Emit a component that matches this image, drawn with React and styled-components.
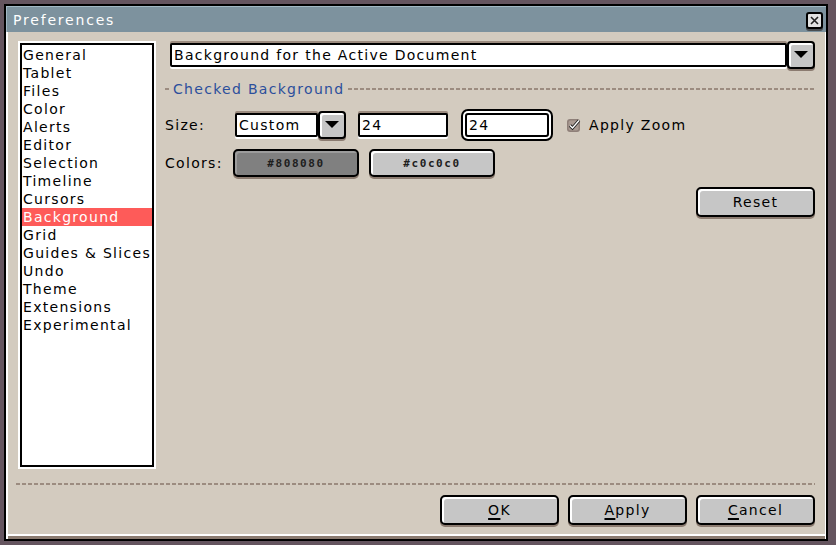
import React, { useState } from 'react';
import styled, { createGlobalStyle } from 'styled-components';

const GlobalStyle = createGlobalStyle`
  html, body {
    margin: 0;
    padding: 0;
    background: #65555f;
  }
  * {
    box-sizing: border-box;
  }
`;

const FONT = `"DejaVu Sans", "Liberation Sans", sans-serif`;

const Desktop = styled.div`
  width: 836px;
  height: 545px;
  padding: 4px 0 0 4px;
  background: #65555f;
  font-family: ${FONT};
  font-size: 14px;
  letter-spacing: 1.3px;
  color: #000;
`;

const Window = styled.div`
  width: 824px;
  height: 537px;
  border: 2px solid #000;
  background: #d3cbbf;
  display: flex;
  flex-direction: column;
  box-shadow: inset 2px 0 0 #fff, inset -1px 0 0 #fff, inset 0 -3px 0 #8b7b70, inset 0 -5px 0 #fff;
`;

const TitleBar = styled.div`
  height: 26px;
  background: #7d929e;
  border-top: 1px solid #a3b9c5;
  border-left: 1px solid #a3b9c5;
  display: flex;
  align-items: center;
  justify-content: space-between;
  padding: 0 3px 0 6px;
`;

const Title = styled.span`
  color: #fff;
  letter-spacing: 1.8px;
`;

const CloseButton = styled.button`
  width: 17px;
  height: 17px;
  padding: 0;
  margin-top: 2px;
  border: 2px solid #000;
  border-radius: 3px;
  background: #e2e2e2;
  box-shadow: 0 2px 0 #4b4f52;
  display: flex;
  align-items: center;
  justify-content: center;
`;

const Body = styled.div`
  flex: 1;
  display: flex;
  flex-direction: column;
  padding: 11px 11px 13px 14px;
`;

const Main = styled.div`
  display: flex;
  gap: 11px;
  height: 424px;
`;

const List = styled.ul`
  width: 134px;
  height: 424px;
  margin: 0;
  padding: 1px 0 0;
  list-style: none;
  background: #fff;
  border: 2px solid #000;
  box-shadow: 0 0 0 2px #fff;
`;

const ListItem = styled.li`
  height: 18px;
  line-height: 18px;
  padding-left: 1px;
  white-space: nowrap;
  background: ${p => (p.selected ? '#fe5b59' : 'transparent')};
  color: ${p => (p.selected ? '#fff' : '#000')};
`;

const Panel = styled.div`
  flex: 1;
  display: flex;
  flex-direction: column;
`;

const Combo = styled.div`
  display: flex;
  align-items: center;
  margin: ${p => (p.top ? '-2px 0 0 5px' : '0')};
`;

const Entry = styled.div`
  flex: ${p => (p.grow ? 1 : 'none')};
  width: ${p => p.width || 'auto'};
  height: 24px;
  padding: 0 2px;
  background: #fff;
  border: 2px solid #000;
  border-radius: ${p => (p.focused ? '3px' : '2px')};
  display: flex;
  align-items: center;
  white-space: nowrap;
  box-shadow: ${p =>
    p.focused
      ? '0 0 0 2px #fff, 0 0 0 4px #000'
      : '0 -2px 0 #9c8c80, 0 2px 0 #fff'};
  margin: ${p => (p.focused ? '0 4px 0 5px' : '0')};
`;

const DropButton = styled.button`
  width: 28px;
  height: 28px;
  padding: 0;
  border: 2px solid #000;
  border-radius: 4px;
  background: #c6c6c6;
  box-shadow: inset 2px 2px 0 #fff, 0 2px 0 #8b7b70;
  display: flex;
  align-items: center;
  justify-content: center;
`;

const SectionHeader = styled.div`
  display: flex;
  align-items: center;
  gap: 2px;
  height: 18px;
  margin-top: 11px;
  color: #2c4f9c;
`;

const Dash = styled.div`
  height: 2px;
  width: ${p => p.width || 'auto'};
  flex: ${p => (p.grow ? 1 : 'none')};
  margin-left: ${p => p.gap || 0}px;
  background: repeating-linear-gradient(90deg, #9c8c80 0 4px, transparent 4px 6px);
`;

const Row = styled.div`
  display: flex;
  align-items: center;
  gap: ${p => p.gap || 12}px;
  height: ${p => p.height || 30}px;
  margin-top: ${p => p.top || 0}px;
  justify-content: ${p => (p.end ? 'flex-end' : 'flex-start')};
`;

const Label = styled.span`
  width: ${p => p.width}px;
  margin-right: ${p => -p.gap}px;
`;

const Check = styled.label`
  display: flex;
  align-items: center;
  gap: 8px;
  margin-left: 2px;
`;

const SwatchButton = styled.button`
  width: 126px;
  height: 28px;
  border: 2px solid #000;
  border-radius: 5px;
  background: ${p => p.color};
  box-shadow: inset 2px 2px 0 ${p => p.light}, 0 2px 0 #8b7b70;
  font-family: "DejaVu Sans Mono", monospace;
  font-weight: bold;
  font-size: 11px;
  letter-spacing: 1.6px;
  color: #1e1e1e;
`;

const Button = styled.button`
  width: 119px;
  height: 30px;
  padding: 0;
  border: 2px solid #000;
  border-radius: 5px;
  background: #c6c6c6;
  box-shadow: inset 2px 2px 0 #fff, 0 2px 0 #8b7b70;
  font-family: ${FONT};
  font-size: 14px;
  letter-spacing: 1.3px;
  color: #000;

  u {
    text-decoration-thickness: 2px;
    text-underline-offset: 3px;
  }
`;

const Separator = styled(Dash)`
  margin: 16px 0 0 -4px;
`;

const Footer = styled.div`
  display: flex;
  justify-content: flex-end;
  gap: 9px;
  margin-top: 10px;
`;

const sections = [
  'General', 'Tablet', 'Files', 'Color', 'Alerts', 'Editor', 'Selection',
  'Timeline', 'Cursors', 'Background', 'Grid', 'Guides & Slices', 'Undo',
  'Theme', 'Extensions', 'Experimental',
];

const Arrow = () => (
  <svg width="14" height="8" viewBox="0 0 14 8">
    <polygon points="0,0 14,0 7,7" fill="#000" />
  </svg>
);

const CloseIcon = () => (
  <svg width="9" height="9" viewBox="0 0 9 9">
    <path d="M1 1L8 8M8 1L1 8" stroke="#222" strokeWidth="1.6" />
  </svg>
);

const CheckIcon = () => (
  <svg width="14" height="14" viewBox="0 0 14 14">
    <rect x="0" y="1" width="13" height="13" rx="3" fill="#8f8079" />
    <rect x="1.5" y="2.5" width="10" height="10" rx="2" fill="#a99a92" />
    <path d="M3 7.5L5.5 10L12 2.5" stroke="#222" strokeWidth="3.2" fill="none" />
    <path d="M3 7.5L5.5 10L12 2.5" stroke="#fff" strokeWidth="1.4" fill="none" />
  </svg>
);

export default function App() {
  const [selected, setSelected] = useState('Background');

  return (
    <Desktop>
      <GlobalStyle />
      <Window>
        <TitleBar>
          <Title>Preferences</Title>
          <CloseButton><CloseIcon /></CloseButton>
        </TitleBar>
        <Body>
          <Main>
            <List>
              {sections.map(name => (
                <ListItem
                  key={name}
                  selected={name === selected}
                  onClick={() => setSelected(name)}
                >
                  {name}
                </ListItem>
              ))}
            </List>
            <Panel>
              <Combo top>
                <Entry grow>Background for the Active Document</Entry>
                <DropButton><Arrow /></DropButton>
              </Combo>

              <SectionHeader>
                <Dash width="6px" />
                <span>Checked Background</span>
                <Dash grow gap={2} />
              </SectionHeader>

              <Row top={12}>
                <Label width={70} gap={12}>Size:</Label>
                <Combo>
                  <Entry width="83px">Custom</Entry>
                  <DropButton><Arrow /></DropButton>
                </Combo>
                <Entry width="90px">24</Entry>
                <Entry width="84px" focused>24</Entry>
                <Check>
                  <CheckIcon />
                  Apply Zoom
                </Check>
              </Row>

              <Row top={9} height={28} gap={10}>
                <Label width={68} gap={10}>Colors:</Label>
                <SwatchButton color="#808080" light="#9c9c9c">#808080</SwatchButton>
                <SwatchButton color="#c6c6c6" light="#fff">#c0c0c0</SwatchButton>
              </Row>

              <Row top={10} end>
                <Button>Reset</Button>
              </Row>
            </Panel>
          </Main>

          <Separator />

          <Footer>
            <Button><u>O</u>K</Button>
            <Button><u>A</u>pply</Button>
            <Button><u>C</u>ancel</Button>
          </Footer>
        </Body>
      </Window>
    </Desktop>
  );
}
